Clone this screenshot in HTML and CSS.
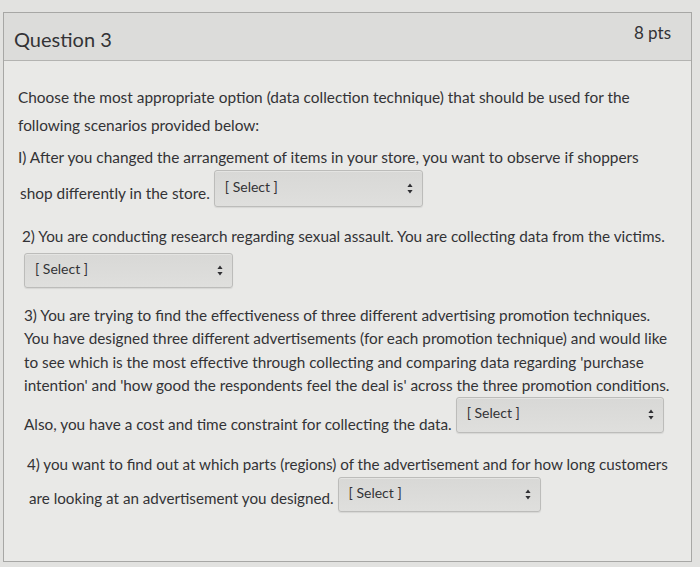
FILE: index.html
```html
<!DOCTYPE html>
<html lang="en">
<head>
<meta charset="utf-8">
<title>Question 3</title>
<link rel="stylesheet" href="styles.css">
</head>
<body>
<div class="card">
  <div class="card-header">
    <h2 class="q-title">Question 3</h2>
    <span class="q-points">8 pts</span>
  </div>
  <div class="card-body">
    <div class="intro">
      <div class="line">Choose the most appropriate option (data collection technique) that should be used for the</div>
      <div class="line">following scenarios provided below:</div>
    </div>

    <div class="item item-1">
      <div class="line">I) After you changed the arrangement of items in your store, you want to observe if shoppers</div>
      <div class="select-row">
        <span class="row-text">shop differently in the store.</span>
        <span class="select"><span class="select-label">[ Select ]</span><svg class="arrows" width="6" height="11" viewBox="0 0 6 11"><path d="M3 0.5 L5.6 4 L0.4 4 Z M0.4 7 L5.6 7 L3 10.5 Z" fill="#2f2f33"/></svg></span>
      </div>
    </div>

    <div class="item item-2">
      <div class="line">2) You are conducting research regarding sexual assault. You are collecting data from the victims.</div>
      <div class="select-row">
        <span class="select"><span class="select-label">[ Select ]</span><svg class="arrows" width="6" height="11" viewBox="0 0 6 11"><path d="M3 0.5 L5.6 4 L0.4 4 Z M0.4 7 L5.6 7 L3 10.5 Z" fill="#2f2f33"/></svg></span>
      </div>
    </div>

    <div class="item item-3">
      <div class="line">3) You are trying to find the effectiveness of three different advertising promotion techniques.</div>
      <div class="line">You have designed three different advertisements (for each promotion technique) and would like</div>
      <div class="line">to see which is the most effective through collecting and comparing data regarding 'purchase</div>
      <div class="line">intention' and 'how good the respondents feel the deal is' across the three promotion conditions.</div>
      <div class="select-row">
        <span class="row-text">Also, you have a cost and time constraint for collecting the data.</span>
        <span class="select"><span class="select-label">[ Select ]</span><svg class="arrows" width="6" height="11" viewBox="0 0 6 11"><path d="M3 0.5 L5.6 4 L0.4 4 Z M0.4 7 L5.6 7 L3 10.5 Z" fill="#2f2f33"/></svg></span>
      </div>
    </div>

    <div class="item item-4">
      <div class="line">4) you want to find out at which parts (regions) of the advertisement and for how long customers</div>
      <div class="select-row">
        <span class="row-text">are looking at an advertisement you designed.</span>
        <span class="select"><span class="select-label">[ Select ]</span><svg class="arrows" width="6" height="11" viewBox="0 0 6 11"><path d="M3 0.5 L5.6 4 L0.4 4 Z M0.4 7 L5.6 7 L3 10.5 Z" fill="#2f2f33"/></svg></span>
      </div>
    </div>
  </div>
</div>
</body>
</html>
```

FILE: styles.css
```css
* { box-sizing: border-box; }

html, body {
  margin: 0;
  padding: 0;
}

body {
  background: #e2e2e0;
  font-family: Lato, "Open Sans", sans-serif;
  color: #333336;
  padding: 12px 0 0 3px;
  height: 567px;
  overflow: hidden;
}

.card {
  width: 689px;
  height: 550px;
  border: 1px solid #a7a7a5;
  background: #e9e9e7;
}

.card-header {
  height: 48px;
  background: #dcdcda;
  border-bottom: 1px solid #b3b3b1;
  display: flex;
  justify-content: space-between;
  align-items: flex-start;
  padding: 0 20px 0 10px;
}

.q-title {
  margin: 13px 0 0;
  font-size: 20px;
  font-weight: 400;
  line-height: 26px;
}

.q-points {
  margin-top: 9px;
  font-size: 17px;
  line-height: 22px;
}

.card-body {
  padding: 22px 0 0 14px;
}

.line {
  white-space: nowrap;
}

.intro {
  font-size: 15.4px;
  line-height: 28px;
}

.item-1 {
  font-size: 15.4px;
  line-height: 24px;
  margin-top: 6px;
}

.item-2 {
  font-size: 15.3px;
  line-height: 24px;
  margin-top: 17px;
  padding-left: 4px;
}

.item-3 {
  font-size: 15.3px;
  line-height: 23.4px;
  margin-top: 16px;
  padding-left: 6px;
}

.item-4 {
  font-size: 15.2px;
  line-height: 24px;
  margin-top: 16px;
  padding-left: 9px;
}

.select-row {
  display: flex;
  align-items: center;
  gap: 4px;
  white-space: nowrap;
}

.item-1 .select-row { margin-top: 1px; }
.item-2 .select-row { margin-top: 5px; padding-left: 2px; }
.item-3 .select-row { margin-top: -4px; }
.item-4 .select-row { margin-top: 1px; padding-left: 2px; }

.item-1 .row-text { margin-top: 9px; padding-left: 2px; }
.item-3 .row-text { margin-top: 19px; }
.item-4 .row-text { margin-top: 6px; }

.select {
  display: flex;
  align-items: center;
  justify-content: space-between;
  width: 209px;
  height: 37px;
  padding: 0 9px 0 10px;
  border: 1px solid #bcbcba;
  border-radius: 3px;
  background: linear-gradient(#d8d8d6, #dfdfdd);
  box-shadow: inset 0 1px 0 #e4e4e2, 0 1px 1px rgba(0, 0, 0, 0.08);
}

.item-2 .select { height: 35px; }
.item-3 .select { height: 36px; width: 208px; }
.item-4 .select { height: 35px; width: 203px; }

.select-label {
  font-size: 14px;
  line-height: 18px;
  margin-top: -3px;
}

.arrows {
  display: block;
}
```
